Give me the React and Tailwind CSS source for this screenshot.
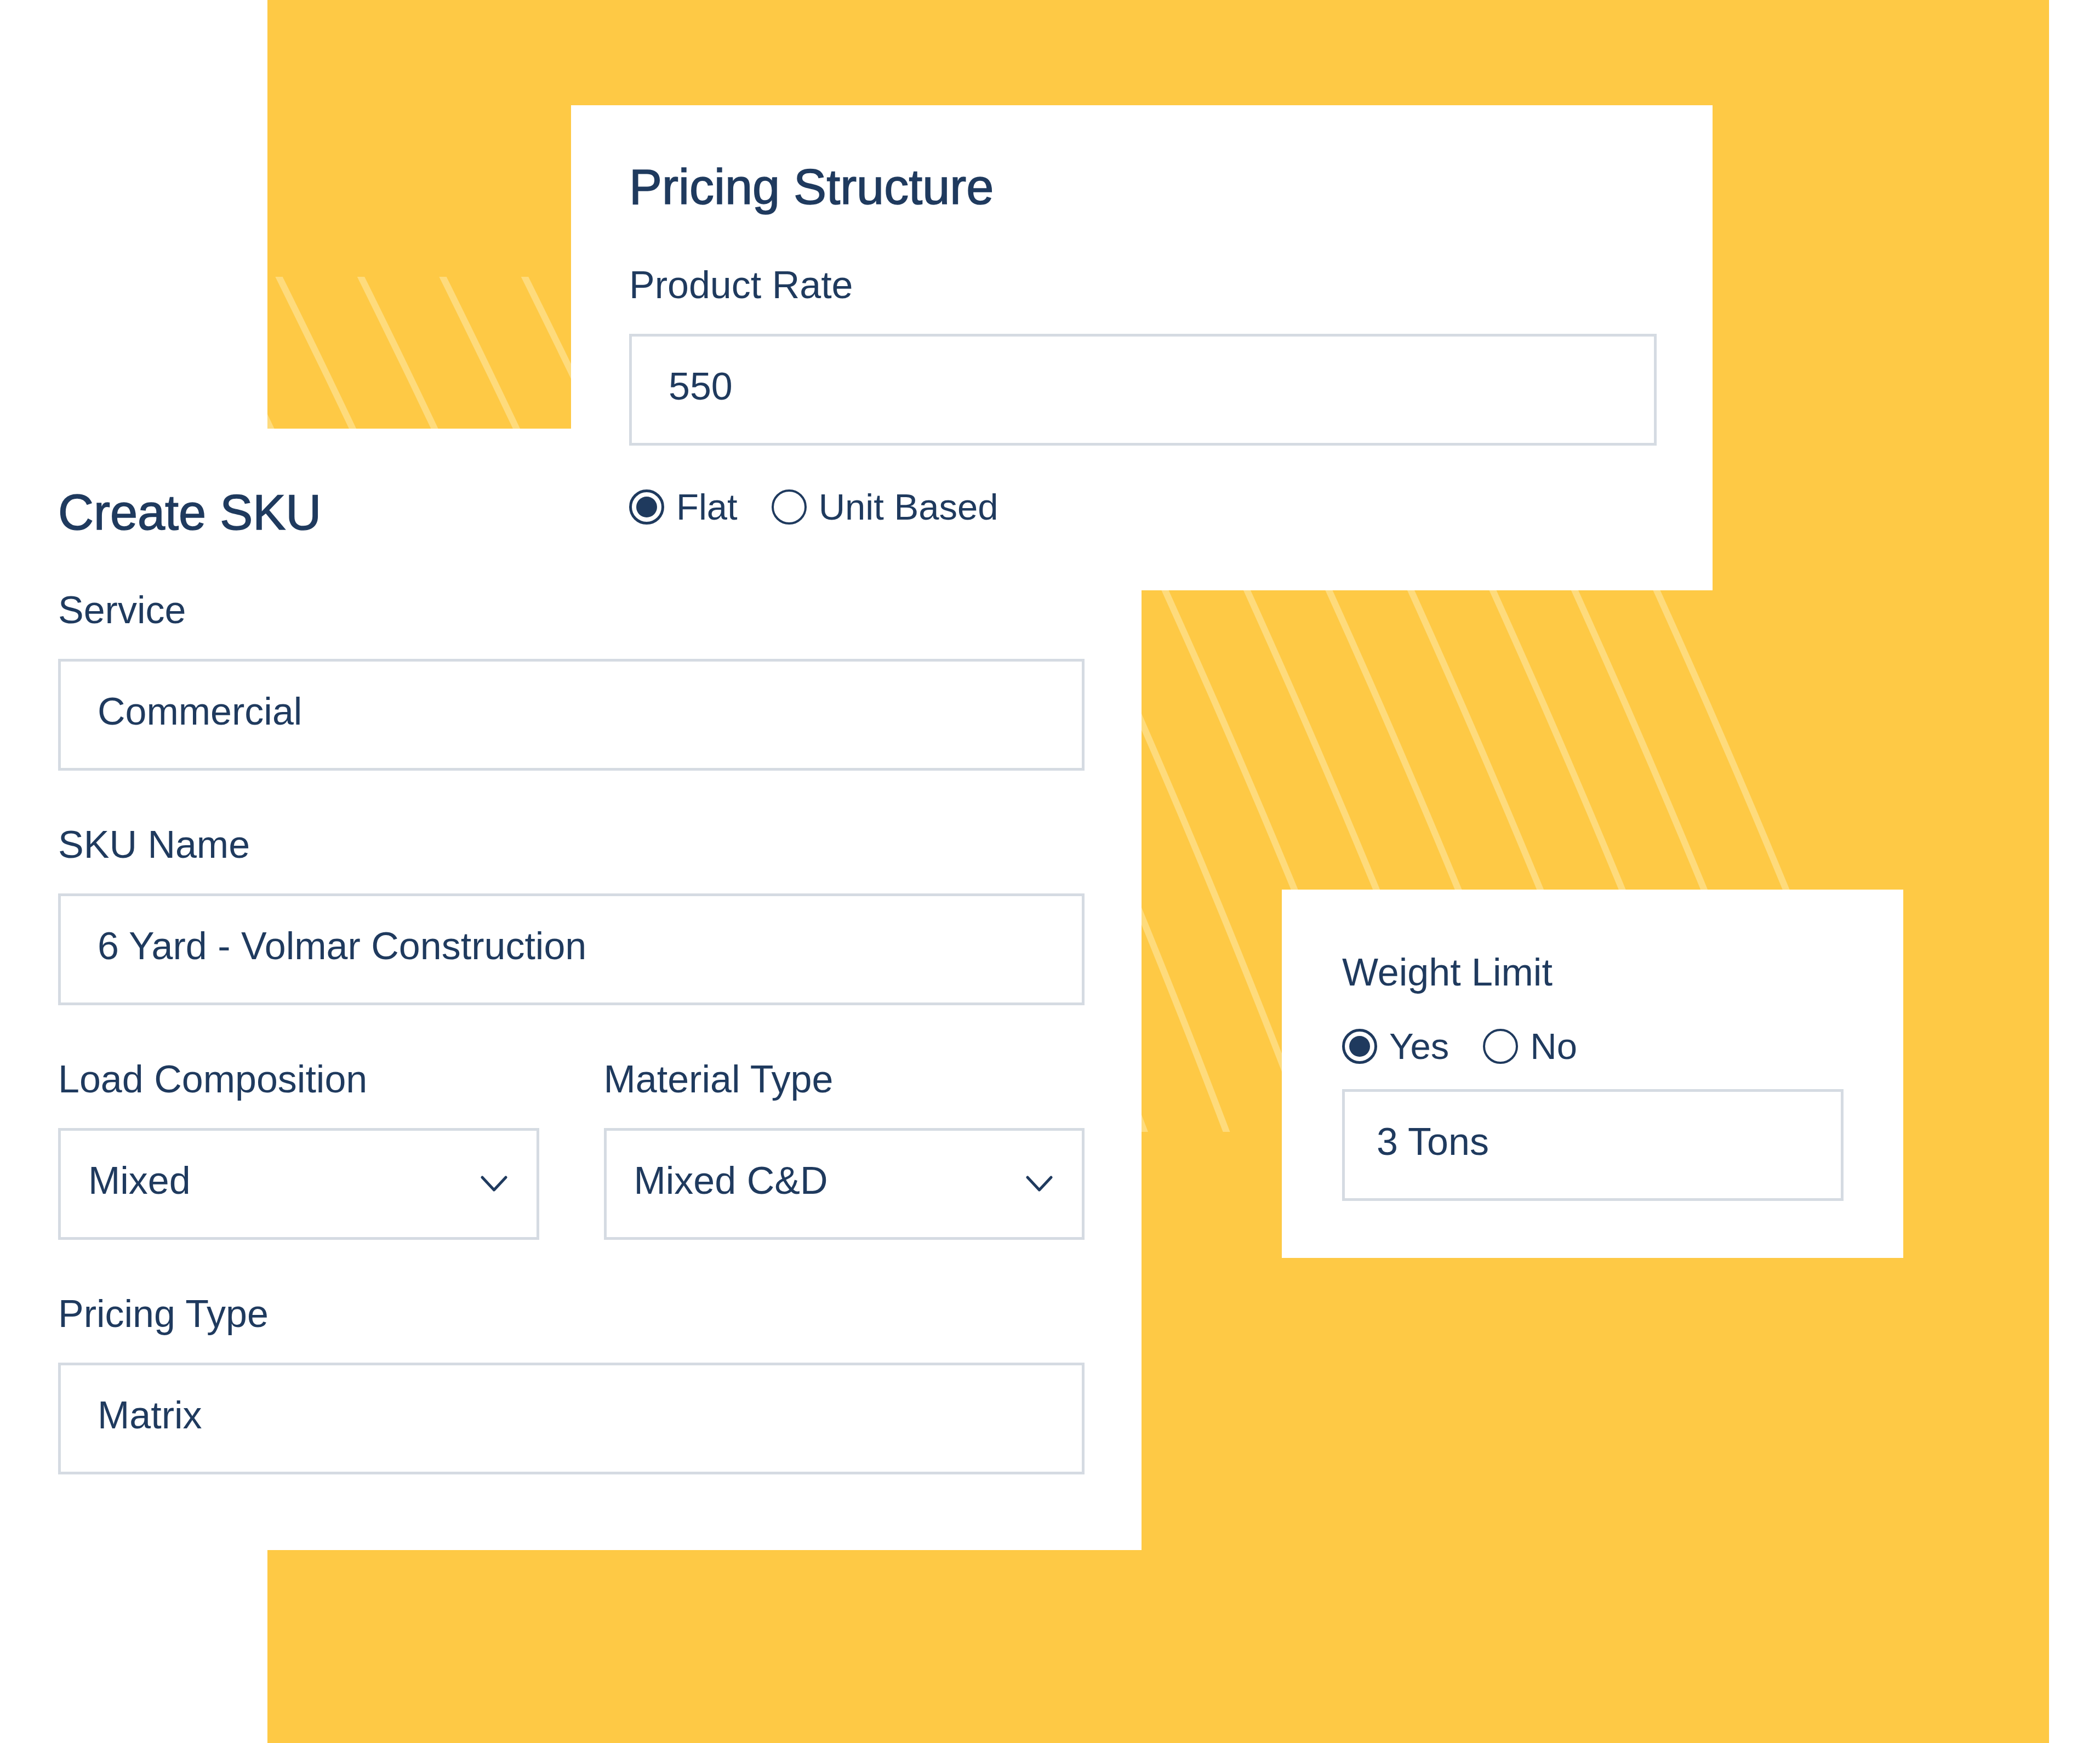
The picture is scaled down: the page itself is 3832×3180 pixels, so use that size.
import React from 'react';

const NAVY = '#1f3a5e';

// diagonal stripes on the yellow backdrop, slightly bowed
const STRIPE_STARTS = Array.from({ length: 18 }, (_, i) => 509 + 149.5 * (i - 2));

function stripePoints(x0) {
  const pts = [];
  for (let y = 485; y <= 2085; y += 40) {
    const d = y - 505;
    pts.push(`${(x0 + 0.496 * d - 0.0000375 * d * d).toFixed(1)},${y}`);
  }
  return pts.join(' ');
}

function Radio({ label, checked }) {
  return (
    <div className="flex items-center">
      <span
        className={
          checked
            ? 'w-[64px] h-[64px] rounded-full border-[5px] border-[#1f3a5e] flex items-center justify-center'
            : 'w-[64px] h-[64px] rounded-full border-[4px] border-[#1f3a5e]'
        }
      >
        {checked && <span className="w-[38px] h-[38px] rounded-full bg-[#1f3a5e]" />}
      </span>
      <span className="ml-[22px] text-[67px] leading-none">{label}</span>
    </div>
  );
}

function TextBox({ value, pad = 'pl-[67px]' }) {
  return (
    <div className={`h-[204px] border-[5px] border-[#d5dbe2] flex items-center pb-[12px] ${pad} text-[70px] leading-none`}>
      {value}
    </div>
  );
}

function SelectBox({ value }) {
  return (
    <div className="h-[204px] border-[5px] border-[#d5dbe2] flex items-center justify-between pb-[12px] pl-[50px] pr-[53px] text-[70px] leading-none">
      <span>{value}</span>
      <svg width="49" height="30" viewBox="0 0 49 30" fill="none" className="mt-[12px]">
        <polyline points="3,3 24.5,26 46,3" stroke={NAVY} strokeWidth="5" strokeLinecap="round" strokeLinejoin="round" />
      </svg>
    </div>
  );
}

function Field({ label, children, className = 'mt-[100px]' }) {
  return (
    <div className={className}>
      <p className="text-[70px] leading-none">{label}</p>
      <div className="mt-[54px]">{children}</div>
    </div>
  );
}

const TITLE = "text-[90px] leading-none [-webkit-text-stroke:1.5px_#1f3a5e]";

export default function App() {
  return (
    <div className="relative w-[3832px] h-[3180px] bg-white overflow-hidden font-['Liberation_Sans',Arial,sans-serif] text-[#1f3a5e]">
      {/* yellow backdrop */}
      <div className="absolute left-[488px] top-0 w-[3251px] h-[3180px] bg-[#fec945]" />
      <svg className="absolute left-0 top-0" width="3832" height="3180" viewBox="0 0 3832 3180">
        <defs>
          <clipPath id="stripe-clip">
            <rect x="488" y="505" width="3251" height="1560" />
          </clipPath>
        </defs>
        <g clipPath="url(#stripe-clip)" stroke="#fedb7c" strokeWidth="12" fill="none">
          {STRIPE_STARTS.map((x0) => (
            <polyline key={x0} points={stripePoints(x0)} />
          ))}
        </g>
      </svg>

      {/* Create SKU */}
      <div className="absolute left-0 top-[782px] w-[2083px] h-[2046px] bg-white pl-[106px] pr-[104px] pt-[108px]">
        <h1 className={TITLE}>Create SKU</h1>
        <Field label="Service" className="mt-[98px]">
          <TextBox value="Commercial" />
        </Field>
        <Field label="SKU Name">
          <TextBox value="6 Yard - Volmar Construction" />
        </Field>
        <div className="grid grid-cols-2 gap-x-[118px]">
          <Field label="Load Composition">
            <SelectBox value="Mixed" />
          </Field>
          <Field label="Material Type">
            <SelectBox value="Mixed C&D" />
          </Field>
        </div>
        <Field label="Pricing Type">
          <TextBox value="Matrix" />
        </Field>
      </div>

      {/* Pricing Structure, sits over the SKU card */}
      <div className="absolute left-[1042px] top-[192px] w-[2083px] h-[885px] bg-white pl-[106px] pr-[102px] pt-[104px]">
        <h2 className={TITLE}>Pricing Structure</h2>
        <Field label="Product Rate" className="mt-[99px]">
          <TextBox value="550" />
        </Field>
        <div className="mt-[78px] flex items-center gap-[62px]">
          <Radio label="Flat" checked />
          <Radio label="Unit Based" />
        </div>
      </div>

      {/* Weight Limit */}
      <div className="absolute left-[2339px] top-[1623px] w-[1134px] h-[672px] bg-white pl-[110px] pr-[109px] pt-[116px]">
        <p className="text-[70px] leading-none">Weight Limit</p>
        <div className="mt-[66px] flex items-center gap-[62px]">
          <Radio label="Yes" checked />
          <Radio label="No" />
        </div>
        <div className="mt-[45px]">
          <TextBox value="3 Tons" pad="pl-[58px]" />
        </div>
      </div>
    </div>
  );
}
